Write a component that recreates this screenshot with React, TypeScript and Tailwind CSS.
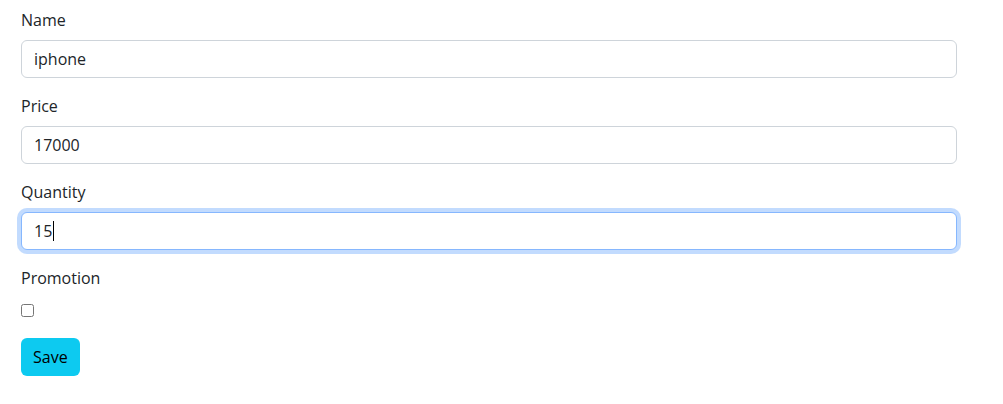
import { useState } from "react";

const inputBase =
  "block w-full h-[38px] rounded-[6px] border bg-white px-3 py-1.5 text-base leading-6 text-[#212529] outline-none";

export default function App() {
  const [name, setName] = useState("iphone");
  const [price, setPrice] = useState("17000");
  const [quantity, setQuantity] = useState("15");
  const [promotion, setPromotion] = useState(false);

  return (
    <div className="min-h-[404px] bg-white font-['Open_Sans',sans-serif] text-base leading-6 text-[#212529]">
      <form className="ml-[21px] w-[936px] pt-2" onSubmit={(e) => e.preventDefault()}>
        <div className="mb-4">
          <label className="mb-2 block">Name</label>
          <input
            className={`${inputBase} border-[#ced4da]`}
            value={name}
            onChange={(e) => setName(e.target.value)}
          />
        </div>
        <div className="mb-4">
          <label className="mb-2 block">Price</label>
          <input
            className={`${inputBase} border-[#ced4da]`}
            value={price}
            onChange={(e) => setPrice(e.target.value)}
          />
        </div>
        <div className="mb-4">
          <label className="mb-2 block">Quantity</label>
          {/* focused state, drawn statically */}
          <div className="relative">
            <input
              className={`${inputBase} border-[#86b7fe] shadow-[0_0_0_4px_rgba(13,110,253,0.25)]`}
              value={quantity}
              onChange={(e) => setQuantity(e.target.value)}
            />
            <span className="absolute left-[32px] top-[9px] h-[20px] w-px bg-black" />
          </div>
        </div>
        <div className="mb-4">
          <label className="mb-2 block">Promotion</label>
          <div className="flex h-6 items-center">
            <input
              type="checkbox"
              className="h-[13px] w-[13px]"
              checked={promotion}
              onChange={(e) => setPromotion(e.target.checked)}
            />
          </div>
        </div>
        <button
          type="submit"
          className="h-[38px] rounded-[6px] bg-[#0dcaf0] px-3 text-base leading-6 text-black"
        >
          Save
        </button>
      </form>
    </div>
  );
}
